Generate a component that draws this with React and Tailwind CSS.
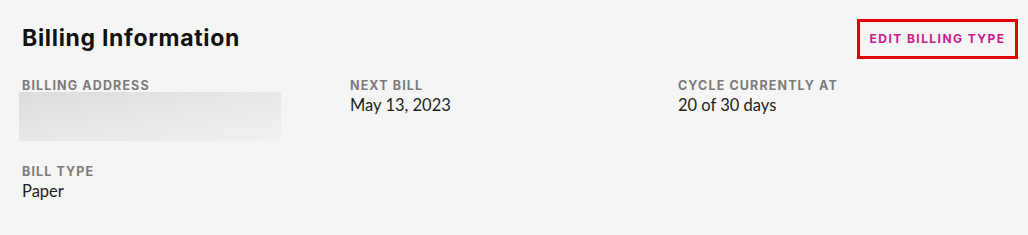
import React from 'react';

const Field = ({ label, value, children }) => (
  <div className="flex flex-col">
    <span className="text-[12.5px] font-bold tracking-[0.09em] text-[#7b7b7b] leading-[14px] uppercase">
      {label}
    </span>
    {value && (
      <span className="font-['Lato',sans-serif] text-[16.5px] leading-[22px] text-[#1e1e1e] mt-[1px]">
        {value}
      </span>
    )}
    {children}
  </div>
);

export default function App() {
  return (
    <div className="w-[1028px] h-[235px] bg-[#f5f5f5] font-['Inter',sans-serif]">
      <div className="flex items-start justify-between pl-[22px] pr-[10px] pt-[19px]">
        <h2 className="text-[23px] font-bold text-[#111] leading-[40px] mt-[-1px] tracking-[0.03em]">
          Billing Information
        </h2>
        <button className="w-[161px] h-[40px] border-[3px] border-[#e10000] text-[12px] font-bold tracking-[0.12em] text-[#cc1a8e] uppercase">
          Edit Billing Type
        </button>
      </div>
      <div className="grid grid-cols-3 px-[22px] mt-[20px] gap-y-[24px]">
        <Field label="Billing Address">
          <div className="w-[262px] h-[49px] ml-[-3px] mt-[-1px] bg-gradient-to-br from-[#dcdcdc] via-[#e8e8e8] to-[#f1f1f1]" />
        </Field>
        <Field label="Next Bill" value="May 13, 2023" />
        <Field label="Cycle Currently At" value="20 of 30 days" />
        <Field label="Bill Type" value="Paper" />
      </div>
    </div>
  );
}
